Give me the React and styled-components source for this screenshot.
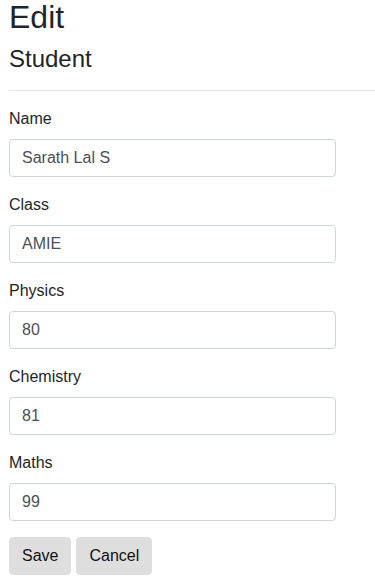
import React from "react";
import styled, { createGlobalStyle } from "styled-components";

const GlobalStyle = createGlobalStyle`
  body {
    margin: 0;
    background: #fff;
    font-family: "Liberation Sans", Arial, sans-serif;
    color: #212529;
  }
  * { box-sizing: border-box; }
`;

const Page = styled.div`
  padding-left: 9px;
`;

const Title = styled.h1`
  margin: 0;
  font-size: 32px;
  font-weight: 400;
  line-height: 1.1;
`;

const Subtitle = styled.h4`
  margin: 10px 0 0 0;
  font-size: 24px;
  font-weight: 400;
  line-height: 1.2;
`;

const Rule = styled.hr`
  margin: 16px 0;
  border: 0;
  border-top: 1px solid #e6e6e6;
`;

const Form = styled.form`
  width: 327px;
`;

const Group = styled.div`
  margin-bottom: 16px;
`;

const Label = styled.label`
  display: block;
  font-size: 16px;
  line-height: 1.5;
  margin-bottom: 8px;
`;

const Input = styled.input`
  display: block;
  width: 100%;
  height: 38px;
  padding: 6px 12px;
  font-family: inherit;
  font-size: 16px;
  line-height: 1.5;
  color: #495057;
  background: #fff;
  border: 1px solid #ced4da;
  border-radius: 4px;
  outline: none;
`;

const Actions = styled.div`
  display: flex;
  gap: 5px;
`;

const Button = styled.button`
  height: 38px;
  padding: 6px 12px;
  font-family: inherit;
  font-size: 16px;
  line-height: 1.5;
  color: #111;
  background: #dedede;
  border: 1px solid #dedede;
  border-radius: 4px;
`;

const fields = [
  { label: "Name", value: "Sarath Lal S" },
  { label: "Class", value: "AMIE" },
  { label: "Physics", value: "80" },
  { label: "Chemistry", value: "81" },
  { label: "Maths", value: "99" },
];

export default function App() {
  return (
    <Page>
      <GlobalStyle />
      <Title>Edit</Title>
      <Subtitle>Student</Subtitle>
      <Rule />
      <Form onSubmit={e => e.preventDefault()}>
        {fields.map(f => (
          <Group key={f.label}>
            <Label>{f.label}</Label>
            <Input defaultValue={f.value} />
          </Group>
        ))}
        <Actions>
          <Button type="submit">Save</Button>
          <Button type="button">Cancel</Button>
        </Actions>
      </Form>
    </Page>
  );
}
